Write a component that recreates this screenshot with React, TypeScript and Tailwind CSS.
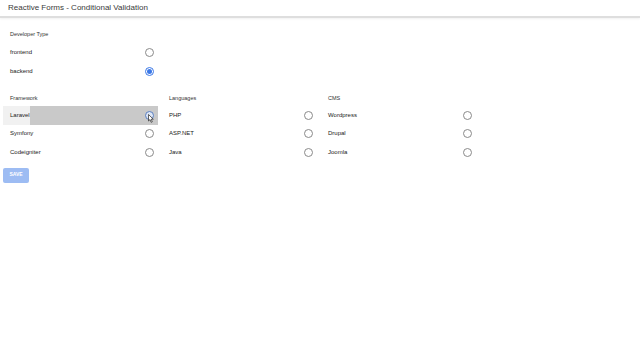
import { useState } from 'react';

type Group = { title: string; options: string[] };

const groups: Group[] = [
  { title: 'Framework', options: ['Laravel', 'Symfony', 'Codeigniter'] },
  { title: 'Languages', options: ['PHP', 'ASP.NET', 'Java'] },
  { title: 'CMS', options: ['Wordpress', 'Drupal', 'Joomla'] },
];

const Radio = ({ checked, hover }: { checked?: boolean; hover?: boolean }) => (
  <span
    className={`flex h-[9px] w-[9px] items-center justify-center rounded-full border ${
      checked ? 'border-[#3b78e7]' : hover ? 'border-[#5b7fc0] bg-[#dde6f5]' : 'border-[#8a8a8a] bg-white'
    }`}
  >
    {checked && <span className="h-[5px] w-[5px] rounded-full bg-[#3b78e7]" />}
  </span>
);

const App = () => {
  const [devType, setDevType] = useState('backend');

  return (
    <div className="relative h-[360px] w-[640px] overflow-hidden bg-white font-['Liberation_Sans',Arial,sans-serif] text-[#222]">
      <div className="flex h-[18px] items-center border-b-2 border-[#dedede] px-[8px] shadow-[0_1px_2px_rgba(0,0,0,0.06)]">
        <span className="text-[8px] text-[#3a3a3a]">Reactive Forms - Conditional Validation</span>
      </div>

      <div className="pl-[3px]">
        <div className="mt-[13px] pl-[7px] text-[5.5px] leading-[6px] text-[#333]">Developer Type</div>
        <div className="mt-[6px] flex w-[155px] flex-col">
          {['frontend', 'backend'].map((t) => (
            <div
              key={t}
              onClick={() => setDevType(t)}
              className="flex h-[19px] items-center justify-between pl-[7px] pr-[4px] text-[6px]"
            >
              <span>{t}</span>
              <Radio checked={devType === t} />
            </div>
          ))}
        </div>

        <div className="mt-[14px] grid w-[477px] grid-cols-3">
          {groups.map((g, gi) => (
            <div key={g.title} className="flex flex-col">
              <div className="pl-[7px] text-[5.5px] leading-[6px] text-[#333]">{g.title}</div>
              <div className="mt-[5px] flex w-[155px] flex-col">
                {g.options.map((o, oi) => {
                  const hot = gi === 0 && oi === 0;
                  return (
                    <div
                      key={o}
                      className={`relative flex h-[18.5px] items-center justify-between pl-[7px] pr-[4px] text-[6px] ${
                        hot ? 'bg-[#f1f1f1]' : ''
                      }`}
                    >
                      {hot && <span className="absolute inset-y-0 left-[27px] right-0 bg-[#c9c9c9]" />}
                      <span className="relative">{o}</span>
                      <span className="relative">
                        <Radio hover={hot} />
                        {hot && (
                          <svg className="absolute left-[3px] top-[3px]" width="7" height="9" viewBox="0 0 7 9">
                            <path d="M0.5 0.5 L0.5 7 L2 5.6 L3.2 8.3 L4.3 7.8 L3.2 5.2 L5.3 5.2 Z" fill="#fff" stroke="#222" strokeWidth="0.7" />
                          </svg>
                        )}
                      </span>
                    </div>
                  );
                })}
              </div>
            </div>
          ))}
        </div>

        <button
          type="button"
          className="mt-[6px] flex h-[15px] w-[26px] items-center justify-center rounded-[2px] bg-[#9dbcf3] text-[5px] font-bold text-white"
        >
          SAVE
        </button>
      </div>
    </div>
  );
};

export default App;
